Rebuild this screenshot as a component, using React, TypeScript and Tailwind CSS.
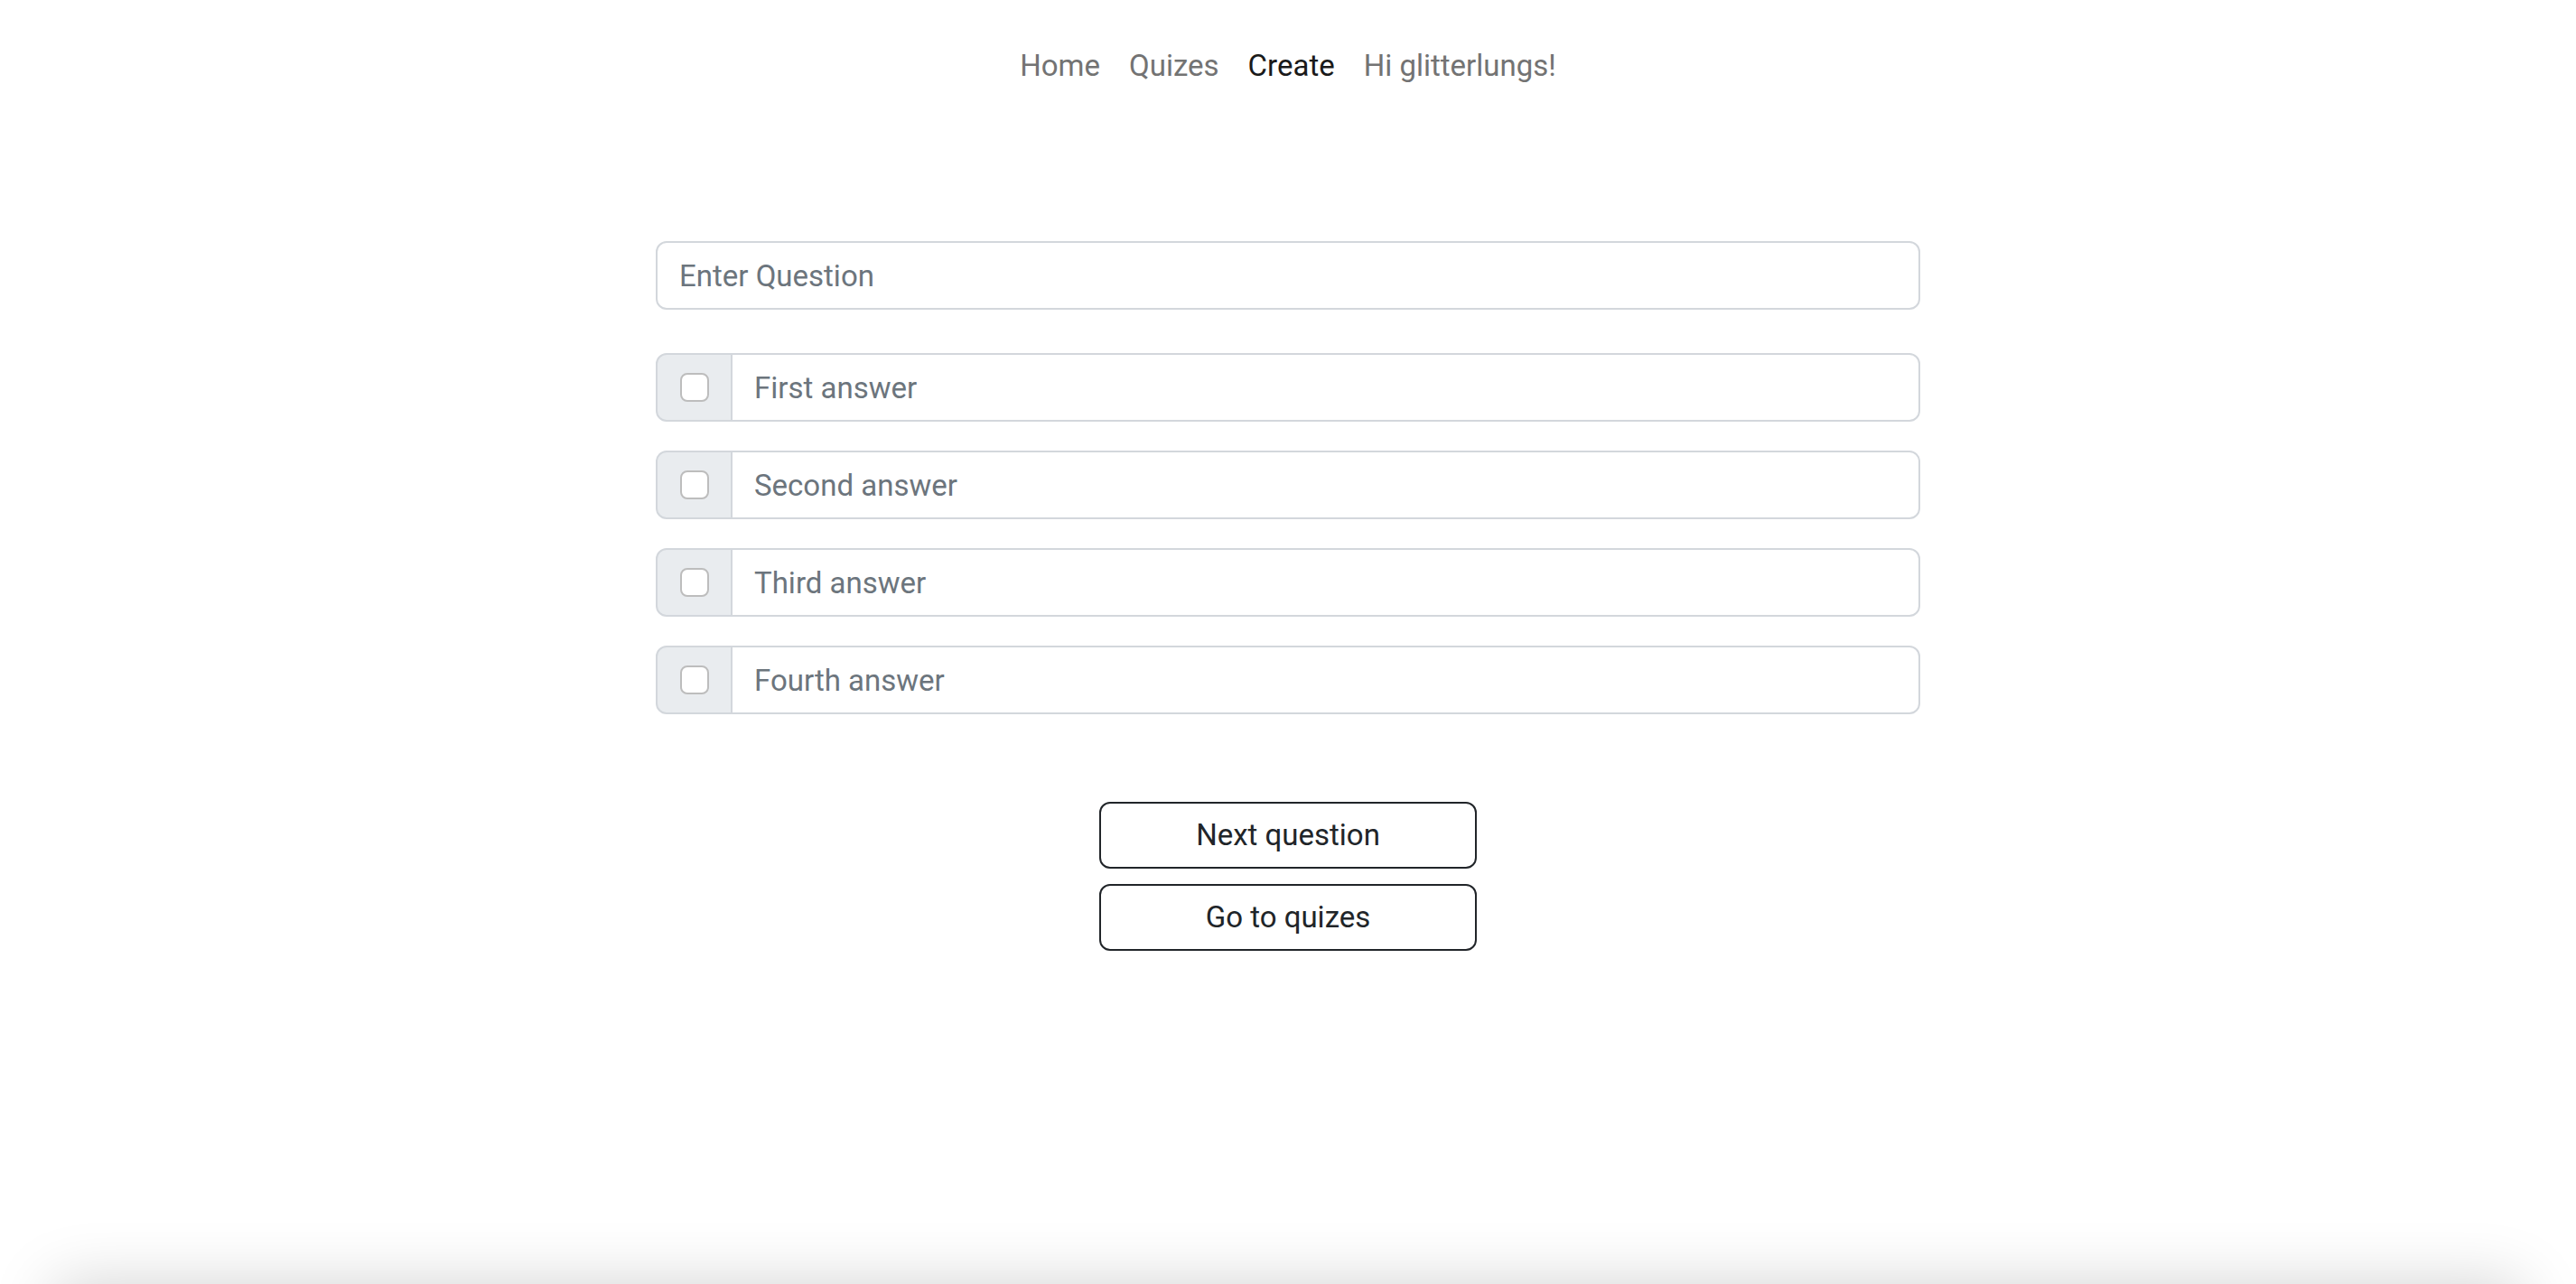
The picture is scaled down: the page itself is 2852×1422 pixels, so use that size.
import React from 'react';

const answers = ['First answer', 'Second answer', 'Third answer', 'Fourth answer'];

function NavLink({ label, active }: { label: string; active?: boolean }) {
  return (
    <a
      href="#"
      className={
        active
          ? 'px-4 leading-[48px] text-[33px] text-[#1a1a1a]'
          : 'px-4 leading-[48px] text-[33px] text-[#737373]'
      }
    >
      {label}
    </a>
  );
}

function AnswerRow({ placeholder }: { placeholder: string }) {
  return (
    <div className="flex h-[76px] w-full">
      <div className="flex w-[85px] shrink-0 items-center justify-center rounded-l-[12px] border-2 border-[#d3d7dc] bg-[#e9ecef]">
        <span className="block h-[32px] w-[32px] rounded-[8px] border-2 border-[#bdbdbd] bg-white" />
      </div>
      <input
        type="text"
        placeholder={placeholder}
        className="-ml-[2px] h-full flex-1 rounded-r-[12px] border-2 border-[#d3d7dc] bg-white px-6 text-[33px] text-[#212529] outline-none placeholder:text-[#6c757d]"
      />
    </div>
  );
}

export default function App() {
  return (
    <div className="flex h-[1422px] flex-col overflow-hidden bg-white font-['Roboto',_'Liberation_Sans',_sans-serif]">
      <nav className="flex justify-center pt-[49px]">
        <NavLink label="Home" />
        <NavLink label="Quizes" />
        <NavLink label="Create" active />
        <NavLink label="Hi glitterlungs!" />
      </nav>

      <main className="mx-auto mt-[170px] flex w-[1400px] flex-col">
        <input
          type="text"
          placeholder="Enter Question"
          className="h-[76px] w-full rounded-[12px] border-2 border-[#d3d7dc] bg-white px-6 text-[33px] text-[#212529] outline-none placeholder:text-[#6c757d]"
        />

        <div className="mt-[48px] flex flex-col gap-[32px]">
          {answers.map((a) => (
            <AnswerRow key={a} placeholder={a} />
          ))}
        </div>

        <div className="mt-[97px] flex flex-col items-center gap-[17px]">
          <button className="h-[74px] w-[418px] rounded-[12px] border-2 border-[#212529] bg-white text-[33px] text-[#212529]">
            Next question
          </button>
          <button className="h-[74px] w-[418px] rounded-[12px] border-2 border-[#212529] bg-white text-[33px] text-[#212529]">
            Go to quizes
          </button>
        </div>
      </main>

      <footer className="mx-[60px] mt-auto -mb-20 h-20 shrink-0 bg-white shadow-[0_0_70px_rgba(0,0,0,0.18)]" />
    </div>
  );
}
